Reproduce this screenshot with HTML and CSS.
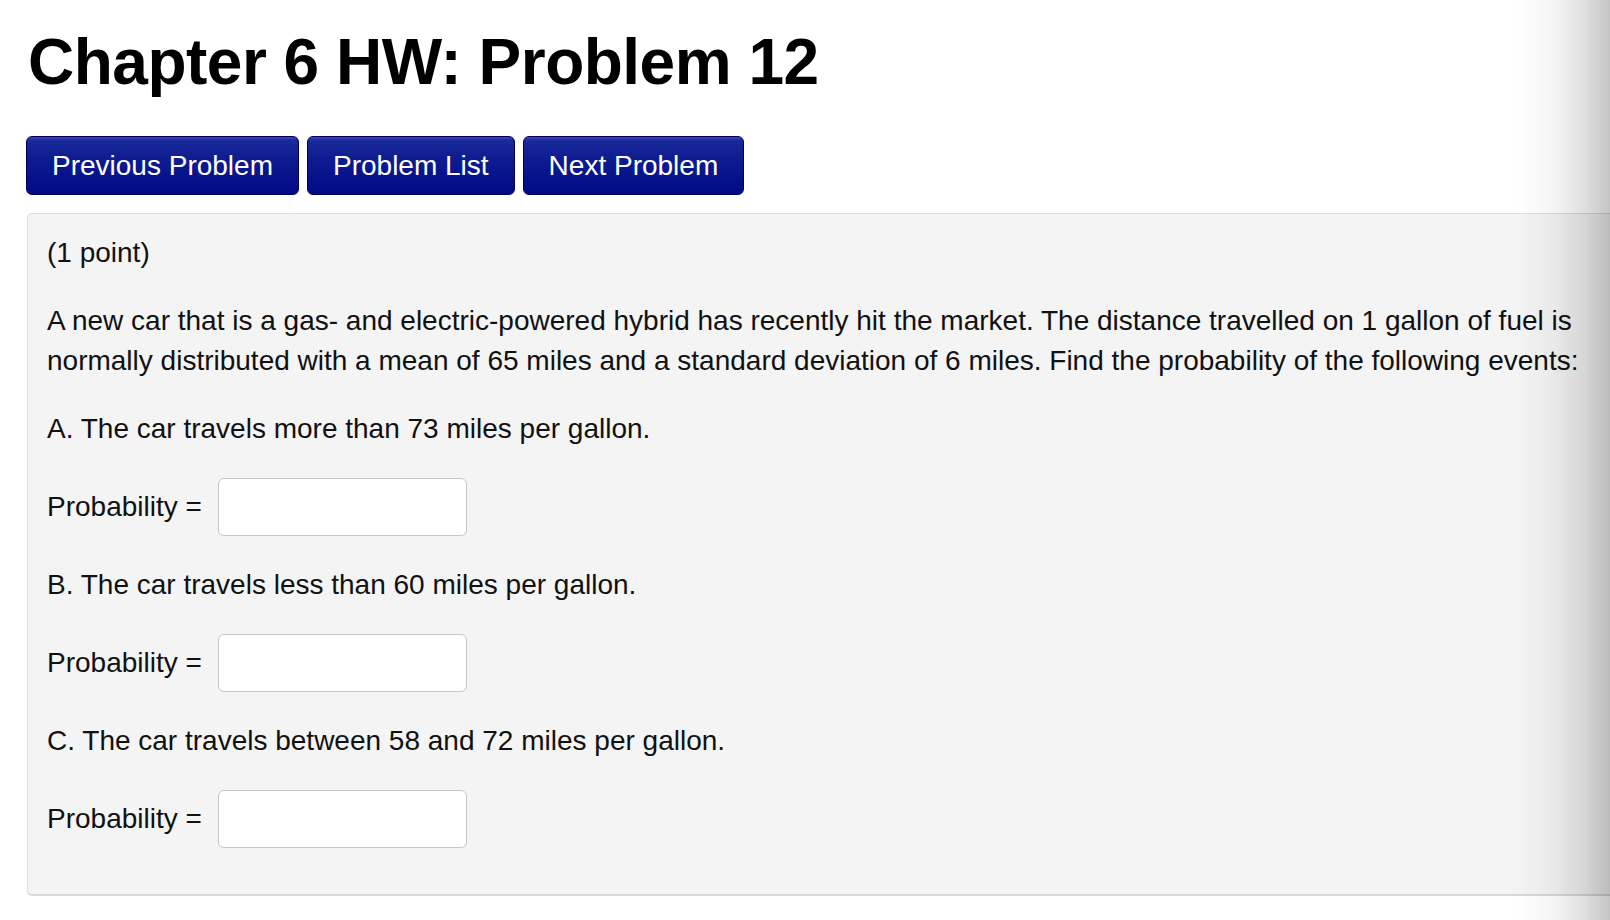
FILE: index.html
```html
<!DOCTYPE html>
<html>
<head>
<meta charset="utf-8">
<title>Chapter 6 HW: Problem 12</title>
<link rel="stylesheet" href="styles.css">
</head>
<body>
<h1 class="title">Chapter 6 HW: Problem 12</h1>
<div class="nav">
  <button class="btn">Previous Problem</button>
  <button class="btn">Problem List</button>
  <button class="btn">Next Problem</button>
</div>
<div class="panel">
  <p class="line">(1 point)</p>
  <p class="line intro">A new car that is a gas- and electric-powered hybrid has recently hit the market. The distance travelled on 1 gallon of fuel is normally distributed with a mean of 65 miles and a standard deviation of 6 miles. Find the probability of the following events:</p>
  <p class="line q">A. The car travels more than 73 miles per gallon.</p>
  <div class="row"><span class="label">Probability =</span><input class="answer" type="text"></div>
  <p class="line q">B. The car travels less than 60 miles per gallon.</p>
  <div class="row"><span class="label">Probability =</span><input class="answer" type="text"></div>
  <p class="line q">C. The car travels between 58 and 72 miles per gallon.</p>
  <div class="row"><span class="label">Probability =</span><input class="answer" type="text"></div>
</div>
<div class="edge"></div>
</body>
</html>
```
FILE: styles.css
```css
html, body {
  margin: 0;
  padding: 0;
  background: #ffffff;
  overflow: hidden;
}
body {
  font-family: "Liberation Sans", Arial, Helvetica, sans-serif;
  color: #111;
  padding-left: 26px;
  width: 1640px;
}
.title {
  margin: 26px 0 0 2px;
  font-size: 64px;
  line-height: 72px;
  font-weight: bold;
  color: #000;
  letter-spacing: -0.5px;
}
.nav {
  display: flex;
  gap: 8px;
  margin-top: 38px;
}
.btn {
  height: 59px;
  padding: 0 25px;
  font-family: "Liberation Sans", Arial, Helvetica, sans-serif;
  font-size: 28px;
  color: #ffffff;
  border: 1px solid #00005a;
  border-radius: 6px;
  background: linear-gradient(to bottom, #3a48b0 0%, #1a2a98 6%, #0d1b90 40%, #000a86 100%);
}
.panel {
  margin-top: 18px;
  margin-left: 1px;
  width: 1560px;
  padding: 19px 19px 46px 19px;
  background: #f4f4f4;
  border: 1px solid #dedede;
  border-bottom: 2px solid #d8d8d8;
  border-radius: 5px;
}
.line {
  margin: 0;
  font-size: 28px;
  line-height: 40px;
}
.intro {
  margin-top: 28px;
}
.q {
  margin-top: 29px;
}
.intro + .q {
  margin-top: 28px;
}
.row {
  display: flex;
  align-items: center;
  margin-top: 29px;
  height: 58px;
}
.label {
  font-size: 28px;
  margin-right: 16px;
}
.answer {
  box-sizing: border-box;
  width: 249px;
  height: 58px;
  background: #ffffff;
  border: 1px solid #c6c6c6;
  border-radius: 6px;
  margin: 0;
}
.edge {
  position: fixed;
  top: 0;
  right: 0;
  width: 95px;
  height: 100%;
  background: linear-gradient(to right, rgba(0,0,0,0) 0%, rgba(0,0,0,0.04) 40%, rgba(0,0,0,0.13) 75%, rgba(0,0,0,0.23) 100%);
  pointer-events: none;
}
```
